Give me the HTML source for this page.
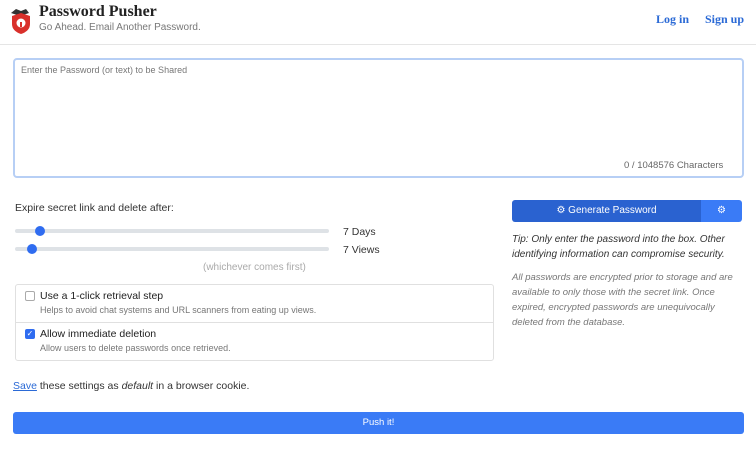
<!DOCTYPE html>
<html><head><meta charset="utf-8"><style>
*{box-sizing:border-box;margin:0;padding:0}
body{width:756px;height:462px;background:#fff;font-family:"Liberation Sans",sans-serif;color:#333;position:relative;overflow:hidden}
.a{position:absolute}
</style></head><body>
<svg class="a" style="left:9px;top:7px" width="24" height="28" viewBox="0 0 24 28">
<path d="M2 6 L7 2 L12 4 L17 2 L20 6 L14 8 L8 8Z" fill="#333"/>
<path d="M3 9 L12 6 L21 9 L21 17 Q21 24 12 27 Q3 24 3 17Z" fill="#d9302b"/>
<circle cx="12" cy="16" r="4.5" fill="#fff"/><rect x="11" y="15" width="2" height="5" fill="#d9302b"/>
</svg>
<div class="a" style="left:39px;top:3px;font-family:'Liberation Serif',serif;font-weight:bold;font-size:16px;color:#222">Password Pusher</div>
<div class="a" style="left:39px;top:22px;font-size:10px;color:#777">Go Ahead. Email Another Password.</div>
<div class="a" style="left:656px;top:12px;font-family:'Liberation Serif',serif;font-weight:bold;font-size:12px;color:#2b6ad6">Log in</div>
<div class="a" style="left:705px;top:12px;font-family:'Liberation Serif',serif;font-weight:bold;font-size:12px;color:#2b6ad6">Sign up</div>
<div class="a" style="left:0;top:44px;width:756px;height:1px;background:#e5e5e5"></div>
<div class="a" style="left:13px;top:58px;width:731px;height:120px;border:2px solid #b7cff5;border-radius:4px"></div>
<div class="a" style="left:21px;top:65px;font-size:9px;color:#777">Enter the Password (or text) to be Shared</div>
<div class="a" style="left:624px;top:160px;font-size:9.5px;color:#666">0 / 1048576 Characters</div>
<div class="a" style="left:15px;top:202px;font-size:10.5px;color:#333">Expire secret link and delete after:</div>
<div class="a" style="left:15px;top:229px;width:314px;height:4px;border-radius:2px;background:#dee2e6"></div>
<div class="a" style="left:35px;top:226px;width:10px;height:10px;border-radius:50%;background:#2f6cf0"></div>
<div class="a" style="left:343px;top:226px;font-size:10.5px">7 Days</div>
<div class="a" style="left:15px;top:247px;width:314px;height:4px;border-radius:2px;background:#dee2e6"></div>
<div class="a" style="left:27px;top:244px;width:10px;height:10px;border-radius:50%;background:#2f6cf0"></div>
<div class="a" style="left:343px;top:244px;font-size:10.5px">7 Views</div>
<div class="a" style="left:203px;top:262px;font-size:10px;color:#aaa">(whichever comes first)</div>
<div class="a" style="left:15px;top:284px;width:479px;height:77px;border:1px solid #e0e0e0;border-radius:3px"></div>
<div class="a" style="left:15px;top:322px;width:479px;height:1px;background:#e0e0e0"></div>
<div class="a" style="left:25px;top:291px;width:10px;height:10px;border:1px solid #aaa;border-radius:2px"></div>
<div class="a" style="left:40px;top:290px;font-size:10.5px;color:#222">Use a 1-click retrieval step</div>
<div class="a" style="left:40px;top:305px;font-size:9px;color:#777">Helps to avoid chat systems and URL scanners from eating up views.</div>
<div class="a" style="left:25px;top:329px;width:10px;height:10px;background:#2f6cf0;border-radius:2px;color:#fff;font-size:8px;line-height:10px;text-align:center">✓</div>
<div class="a" style="left:40px;top:328px;font-size:10.5px;color:#222">Allow immediate deletion</div>
<div class="a" style="left:40px;top:343px;font-size:9px;color:#777">Allow users to delete passwords once retrieved.</div>
<div class="a" style="left:13px;top:380px;font-size:10.5px"><span style="color:#2b6ad6;text-decoration:underline">Save</span> these settings as <i>default</i> in a browser cookie.</div>
<div class="a" style="left:13px;top:412px;width:731px;height:22px;background:#3a7bf6;border-radius:3px;color:#fff;font-size:9.5px;text-align:center;line-height:22px">Push it!</div>
<div class="a" style="left:512px;top:200px;width:189px;height:22px;background:#2a62d0;border-radius:3px 0 0 3px;color:#fff;font-size:10px;text-align:center;line-height:22px">⚙ Generate Password</div>
<div class="a" style="left:701px;top:200px;width:41px;height:22px;background:#3a7bf6;border-radius:0 3px 3px 0;color:#fff;font-size:10px;text-align:center;line-height:22px">⚙</div>
<div class="a" style="left:512px;top:232px;white-space:nowrap;font-size:10px;font-style:italic;line-height:15px;color:#333">Tip: Only enter the password into the box. Other<br>identifying information can compromise security.</div>
<div class="a" style="left:512px;top:270px;width:232px;font-size:9.5px;font-style:italic;line-height:15px;color:#777">All passwords are encrypted prior to storage and are available to only those with the secret link. Once expired, encrypted passwords are unequivocally deleted from the database.</div>
</body></html>
